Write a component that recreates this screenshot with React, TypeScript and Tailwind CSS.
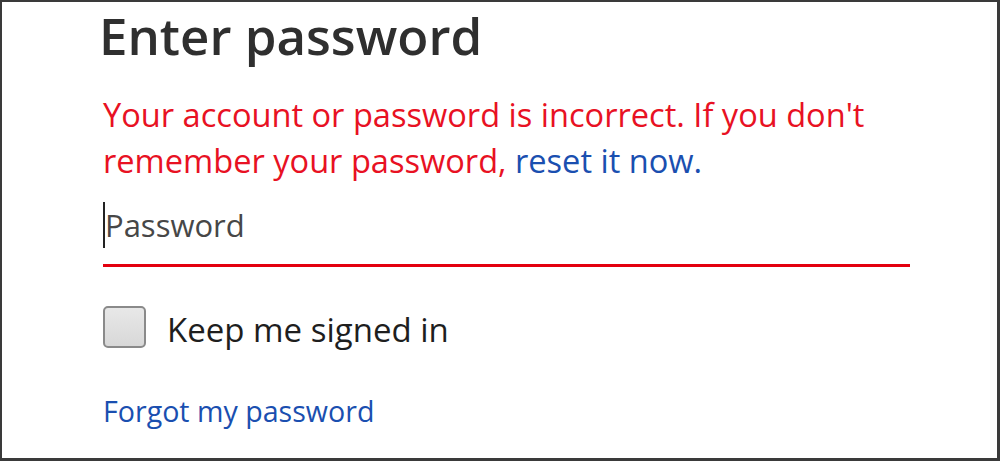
export default function App() {
  return (
    <div className="h-[461px] w-[1000px] bg-white">
      <div
        className="box-border flex h-[461px] w-[1000px] flex-col border-2 border-r-[3px] border-b-[3px] border-[#3a3a3a] bg-white pl-[101px]"
        style={{ fontFamily: '"Open Sans", "Noto Sans", sans-serif' }}
      >
        <h1 className="mt-[1px] -ml-[4px] text-[51px] leading-[64px] font-semibold text-[#2f2f2f]">Enter password</h1>

        <div className="mt-[25px] flex w-[800px] flex-col text-[32.6px] leading-[46px] text-[#e81123]">
          <span>Your account or password is incorrect. If you don't</span>
          <span>
            remember your password, <a href="#" className="text-[#1a4fb0]">reset it now.</a>
          </span>
        </div>

        <div className="mt-[16px] w-[807px] border-b-[3px] border-[#e3000f] pb-[14px]">
          <div className="flex h-[50px] items-center">
            <span className="h-[46px] w-[2px] bg-[#222]" />
            <span className="text-[31px] text-[#474747]">Password</span>
          </div>
        </div>

        <label className="mt-[36px] flex items-center gap-[21px]">
          <span className="box-border block h-[42px] w-[43px] rounded-[5px] border-2 border-[#8a8a8a] bg-gradient-to-b from-[#e8e8e8] to-[#d8d8d8]" />
          <span className="mt-[6px] text-[33px] leading-[42px] text-[#1e1e1e]">Keep me signed in</span>
        </label>

        <a href="#" className="mt-[39px] w-fit text-[28.6px] text-[#1a4fb0]">Forgot my password</a>
      </div>
    </div>
  );
}
